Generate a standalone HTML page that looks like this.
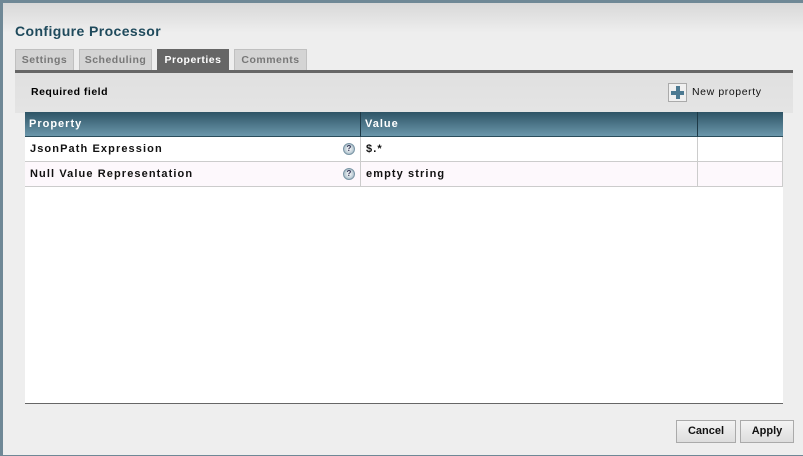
<!DOCTYPE html>
<html><head><style>
body{margin:0;width:803px;height:456px;overflow:hidden;background:#6f8896;font-family:"Liberation Sans",sans-serif;position:relative}
.dlg{position:absolute;left:3px;top:3px;width:810px;height:452px;background:#eeeeee}
.hdr{position:absolute;left:0;top:0;right:0;height:30px;background:linear-gradient(#d8d8d8,#eeeeee)}
.title{position:absolute;left:12px;top:20px;font-size:14px;font-weight:bold;color:#1f4a5c;letter-spacing:0.4px}
.tab{position:absolute;top:46px;height:21px;background:#d4d4d4;border:1px solid #c0c0c0;border-bottom:none;box-sizing:border-box;font-size:10.5px;font-weight:bold;color:#777;line-height:21px;text-align:center;letter-spacing:0.5px}
.tab.on{background:#666;color:#fff;border-color:#666}
.bar{position:absolute;left:12px;top:67px;width:778px;height:3px;background:#666}
.tool{position:absolute;left:12px;top:70px;width:778px;height:40px;background:linear-gradient(#e0e0e0,#e4e4e4)}
.abs{position:absolute}
.tbl{position:absolute;left:22px;top:109px;width:758px;height:291px;background:#fff;border-bottom:1px solid #666}
.th{position:absolute;top:0;height:25px;background:linear-gradient(#2e5466,#6b97ab);border-bottom:1px solid #2a4d5c;box-sizing:border-box;color:#fff;font-size:11px;font-weight:bold;line-height:25px;padding-left:4px;letter-spacing:1px}
.cell{position:absolute;height:25px;box-sizing:border-box;border-bottom:1px solid #ccc;border-right:1px solid #ccc;font-size:11px;font-weight:bold;line-height:25px;padding-left:5px;color:#111;letter-spacing:1.1px}
.q{position:absolute;left:318px;top:6px;width:10px;height:10px;border-radius:50%;background:radial-gradient(#fff,#8fa9b8);border:1px solid #7a95a5;font-size:8px;line-height:10px;text-align:center;color:#335;padding:0;letter-spacing:0}
.btn{position:absolute;top:417px;height:23px;border:1px solid #aaa;background:linear-gradient(#f4f4f4,#ddd);box-sizing:border-box;font-size:11px;font-weight:bold;line-height:21px;text-align:center;color:#111}
</style></head><body>
<div class="dlg">
<div class="hdr"></div>
<div class="title">Configure Processor</div>
<div class="tab" style="left:12px;width:59px">Settings</div>
<div class="tab" style="left:76px;width:73px">Scheduling</div>
<div class="tab on" style="left:154px;width:72px">Properties</div>
<div class="tab" style="left:231px;width:73px">Comments</div>
<div class="bar"></div>
<div class="tool"></div>
<div class="abs" style="left:28px;top:83px;font-size:10.5px;font-weight:bold;letter-spacing:0.5px">Required field</div>
<div class="abs" style="left:665px;top:80px;width:17px;height:17px;border:1px solid #aaa;background:#f0f0f0">
<div class="abs" style="left:7px;top:2px;width:4px;height:13px;background:#4d7a92"></div>
<div class="abs" style="left:2px;top:7px;width:13px;height:4px;background:#4d7a92"></div></div>
<div class="abs" style="left:689px;top:83px;font-size:10.5px;color:#111;letter-spacing:0.6px">New property</div>
<div class="tbl">
<div class="th" style="left:0;width:336px;border-right:1px solid #1e3a47">Property</div>
<div class="th" style="left:336px;width:337px;border-right:1px solid #1e3a47">Value</div>
<div class="th" style="left:673px;width:85px"></div>
<div class="cell" style="left:0;top:25px;width:336px">JsonPath Expression<div class="q">?</div></div>
<div class="cell" style="left:336px;top:25px;width:337px">$.*</div>
<div class="cell" style="left:673px;top:25px;width:85px"></div>
<div class="cell" style="left:0;top:50px;width:336px;background:#fdf8fc">Null Value Representation<div class="q">?</div></div>
<div class="cell" style="left:336px;top:50px;width:337px;background:#fdf8fc">empty string</div>
<div class="cell" style="left:673px;top:50px;width:85px;background:#fdf8fc"></div>
</div>
<div class="btn" style="left:673px;width:60px">Cancel</div>
<div class="btn" style="left:737px;width:54px">Apply</div>
</div>
</body></html>
